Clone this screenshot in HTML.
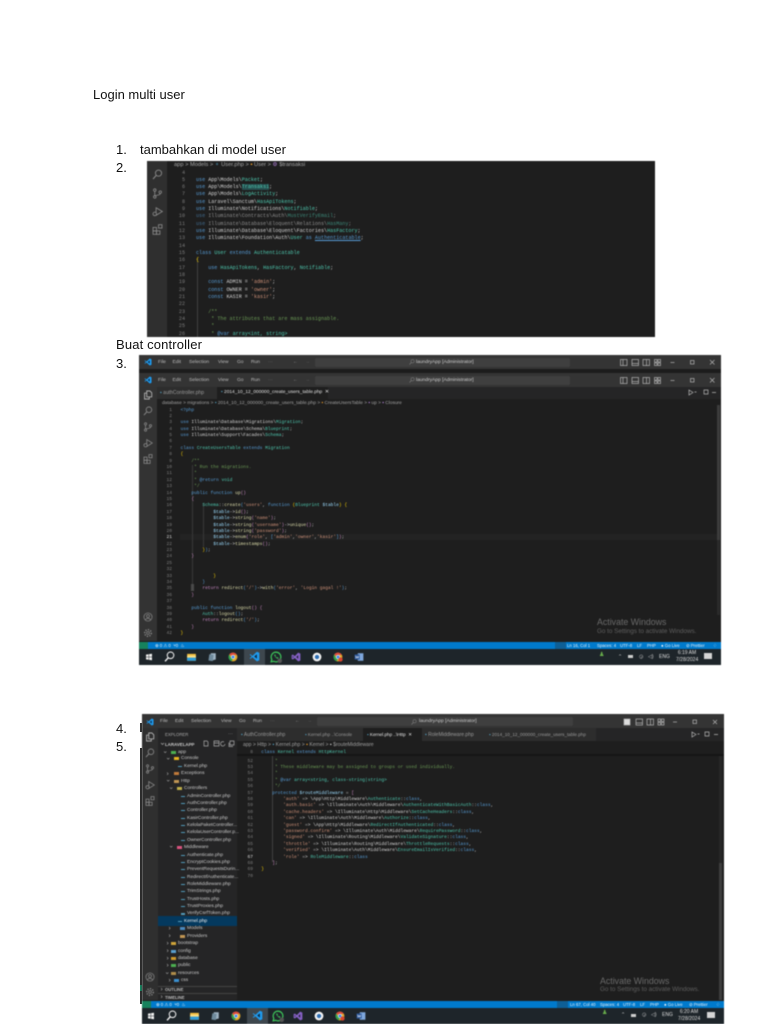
<!DOCTYPE html>
<html><head><meta charset="utf-8"><title>Login multi user</title>
<style>
html,body{margin:0;padding:0;background:#fff}
body{position:relative;width:768px;height:1024px;overflow:hidden;font-family:"Liberation Sans",sans-serif}
.d{position:absolute;font-size:13px;line-height:16px;color:#111;white-space:nowrap}
.w{position:absolute;left:0;top:0;width:768px;height:1024px;filter:blur(.4px)}
.r{position:absolute}
pre{position:absolute;margin:0;font-family:"Liberation Mono",monospace;white-space:pre;color:#d4d4d4}
pre.n{color:#7d7d7d;text-align:right}
.x{position:absolute;white-space:nowrap;color:#c8c8c8;font-size:4.8px;line-height:7px}
.k{color:#569cd6}.t{color:#4ec9b0}.s{color:#ce9178}.c{color:#6a9955}.v{color:#9cdcfe}.f{color:#dcdcaa}.y{color:#ffd700}.q{color:#c586c0}
.u{text-decoration:underline;color:#569cd6}
.sb{position:absolute;white-space:nowrap;color:#e8f2fa;font-size:4.3px;line-height:7px}
.e{position:absolute;white-space:nowrap;color:#bdbdbd;font-size:4.9px;line-height:8px}
.t3{position:absolute;white-space:nowrap;color:#c8c8c8;font-size:4.8px;line-height:7px}
.t3 b{position:absolute;left:-6.5px;top:3px;width:4px;height:1.4px;background:#519aba}
.t3 i{position:absolute;left:-7px;top:2px;width:4.5px;height:3.2px;background:#c09553}
svg{position:absolute;overflow:visible}
</style></head><body>

<div class="d" style="left:93px;top:87px">Login multi user</div>
<div class="d" style="left:116px;top:142px">1.</div>
<div class="d" style="left:140px;top:142px">tambahkan di model user</div>
<div class="d" style="left:116px;top:160px">2.</div>
<div class="d" style="left:116px;top:337px;letter-spacing:.15px">Buat controller</div>
<div class="d" style="left:116px;top:356px">3.</div>
<div class="d" style="left:116px;top:721px">4.</div>
<div class="d" style="left:116px;top:739px">5.</div>
<div class="r" style="left:140px;top:723px;width:2px;height:9px;background:#333"></div>
<div class="r" style="left:140px;top:748px;width:2px;height:256px;background:#2b2b2b"></div>
<div class="r" style="left:140px;top:985px;width:2px;height:6px;background:#16825d"></div>

<svg width="0" height="0" style="left:0;top:0">
<defs>
<symbol id="se" viewBox="0 0 16 16"><circle cx="9.5" cy="6" r="4.5" fill="none" stroke="#8a8a8a" stroke-width="1.3"/><path d="M6 9.5 1.5 14.5" stroke="#8a8a8a" stroke-width="1.5" fill="none"/></symbol>
<symbol id="gi" viewBox="0 0 16 16"><g fill="none" stroke="#8a8a8a" stroke-width="1.2"><circle cx="4" cy="3" r="1.8"/><circle cx="4" cy="13" r="1.8"/><circle cx="12" cy="6" r="1.8"/><path d="M4 5v6M12 8c0 3-6 2-8 3.5"/></g></symbol>
<symbol id="de" viewBox="0 0 16 16"><g fill="none" stroke="#8a8a8a" stroke-width="1.2"><path d="M6 2.5 15 8l-9 5.5z"/><circle cx="4" cy="11.5" r="2.6" fill="#333"/></g></symbol>
<symbol id="ex" viewBox="0 0 16 16"><g fill="none" stroke="#8a8a8a" stroke-width="1.2"><rect x="1.5" y="5" width="5" height="5"/><rect x="1.5" y="10" width="5" height="5"/><rect x="6.5" y="10" width="5" height="5"/><rect x="9.5" y="1" width="5" height="5"/></g></symbol>
<symbol id="fi" viewBox="0 0 16 16"><g fill="none" stroke="#bdbdbd" stroke-width="1.3"><path d="M6 1.5h5l3 3V11H6z"/><path d="M6 5H2.5v9.5H10V11"/></g></symbol>
<symbol id="ac" viewBox="0 0 16 16"><g fill="none" stroke="#8a8a8a" stroke-width="1.1"><circle cx="8" cy="8" r="6.5"/><circle cx="8" cy="6.5" r="2.3"/><path d="M3.5 12.5c2-3 7-3 9 0"/></g></symbol>
<symbol id="ge" viewBox="0 0 16 16"><g fill="none" stroke="#8a8a8a"><circle cx="8" cy="8" r="2.2" stroke-width="1.1"/><circle cx="8" cy="8" r="5.3" stroke-width="2.2" stroke-dasharray="2 2.1"/></g></symbol>
<symbol id="vs" viewBox="0 0 16 16"><path d="M11.5 1 15 2.6v10.8L11.5 15 5 9l-3 2.4-1-.8L4 8 1 5.4l1-.8L5 7z" fill="#1f9cf0"/><path d="M11.5 4.8 7.5 8l4 3.2z" fill="#0b2a45"/></symbol>
<symbol id="wi" viewBox="0 0 16 16"><path d="M2 3.2 7.3 2.4v5.1H2zM8.2 2.3 14 1.5v6H8.2zM2 8.4h5.3v5.2L2 12.8zM8.2 8.4H14v6.1l-5.8-.8z" fill="#f2f2f2"/></symbol>
<symbol id="ts" viewBox="0 0 16 16"><circle cx="9.5" cy="6.2" r="4.8" fill="none" stroke="#f2f2f2" stroke-width="1.5"/><path d="M6 10 1.5 15" stroke="#f2f2f2" stroke-width="2"/></symbol>
<symbol id="fo" viewBox="0 0 16 16"><path d="M1 3h14v11H1z" fill="#f5c242"/><path d="M1 6h14v3H1z" fill="#fbe08a"/><path d="M1 9h14v5H1z" fill="#2d9cdb"/></symbol>
<symbol id="no" viewBox="0 0 16 16"><path d="M6 2h8v10l-8 2z" fill="#9fb4c4"/><path d="M3 4h7v10H3z" fill="#6f8a9c" transform="rotate(8 6 9)"/></symbol>
<symbol id="ch" viewBox="0 0 16 16"><circle cx="8" cy="8" r="7" fill="#e0a92c"/><path d="M8 1a7 7 0 0 1 6.1 3.5H8a3.5 3.5 0 0 0-3.1 1.9L2 4A7 7 0 0 1 8 1z" fill="#dd4b3e"/><path d="M2 4l3 5.5a3.5 3.5 0 0 0 3 2L5.3 14.5A7 7 0 0 1 2 4z" fill="#2fa24f"/><circle cx="8" cy="8" r="3.2" fill="#fff"/><circle cx="8" cy="8" r="2.4" fill="#3f87f0"/></symbol>
<symbol id="wa" viewBox="0 0 16 16"><path d="M8 1.5a6.5 6.5 0 0 1 0 13 6.500 6.500 0 0 1-3-.8L1.500 14.500l.9-3.300A6.500 6.500 0 0 1 8 1.500z" fill="none" stroke="#3ec75a" stroke-width="1.6"/><path d="M5.500 5c1 3 2.500 4.500 5 5.500l.8-1.500-1.600-.9-.7.6c-.8-.4-1.400-1-1.800-1.800l.6-.7L7 4.600z" fill="#3ec75a"/><circle cx="13" cy="13" r="3" fill="#555"/></symbol>
<symbol id="vp" viewBox="0 0 16 16"><path d="M11.500 1 15 2.500v11L11.500 15 6 9.500 3 12l-2-1V5l2-1 3 2.500z" fill="#8661c5"/><path d="M11.500 5 8.500 8l3 3zM2.800 6.500v3L4.300 8z" fill="#1a1f2b"/></symbol>
<symbol id="bc" viewBox="0 0 16 16"><circle cx="8" cy="8" r="7" fill="#f4f4f4"/><circle cx="8" cy="8" r="3.500" fill="#2d6fb5"/></symbol>
<symbol id="cb" viewBox="0 0 16 16"><use href="#ch"/><circle cx="12" cy="12" r="3.400" fill="#d8462f"/></symbol>
<symbol id="wo" viewBox="0 0 16 16"><path d="M6 2h9v12H6z" fill="#7fa8dd"/><path d="M1 4h8v8H1z" fill="#2a5699"/><path d="M2.500 6l1 4 1.500-3 1.500 3 1-4" stroke="#fff" stroke-width=".8" fill="none"/></symbol>
</defs>
</svg>

<!-- IMAGE 1 -->
<div class="w">
<div class="r" style="left:147px;top:161px;width:508px;height:176px;background:#1e1e1e"></div>
<div class="r" style="left:147px;top:161px;width:20px;height:176px;background:#2f2f2f"></div>
<div class="r" style="left:196.500px;top:258px;width:.6px;height:79px;background:#404040"></div>
<div class="e" style="left:174px;top:161px;font-size:5.700px;color:#a8a8a8">app &gt; Models &gt; <span style="color:#519aba">⚬</span> User.php &gt; <span style="color:#ee9d28">▪</span> User &gt; <span style="color:#b180d7">⚙</span> $transaksi</div>
<svg style="left:152px;top:169px" width="11" height="11"><use href="#se"/></svg>
<svg style="left:152px;top:188px" width="11" height="11"><use href="#gi"/></svg>
<svg style="left:152px;top:206px" width="11" height="11"><use href="#de"/></svg>
<svg style="left:152px;top:224px" width="11" height="11"><use href="#ex"/></svg>
<pre class="n" style="left:165px;top:169.500px;width:20px;font-size:5.080px;line-height:7.330px">4
5
6
7
8
9
10
11
12
13
14
15
16
17
18
19
20
21
22
23
24
25
26</pre>
<pre style="left:196px;top:169.500px;font-size:5.080px;line-height:7.330px">

<span class="k">use</span> App\Models\<span class="t">Packet</span>;
<span class="k">use</span> App\Models\<span class="t" style="background:#264f4f">Transaksi</span>;
<span class="k">use</span> App\Models\<span class="t">LogActivity</span>;
<span class="k">use</span> Laravel\Sanctum\<span class="t">HasApiTokens</span>;
<span class="k">use</span> Illuminate\Notifications\<span class="t">Notifiable</span>;
<span style="opacity:.6"><span class="k">use</span> Illuminate\Contracts\Auth\<span class="t">MustVerifyEmail</span>;</span>
<span style="opacity:.6"><span class="k">use</span> Illuminate\Database\Eloquent\Relations\<span class="t">HasMany</span>;</span>
<span class="k">use</span> Illuminate\Database\Eloquent\Factories\<span class="t">HasFactory</span>;
<span class="k">use</span> Illuminate\Foundation\Auth\<span class="t">User</span> <span class="k">as</span> <span class="u">Authenticatable</span>;

<span class="k">class</span> <span class="t">User</span> <span class="k">extends</span> <span class="t">Authenticatable</span>
<span class="y">{</span>
    <span class="k">use</span> <span class="t">HasApiTokens</span>, <span class="t">HasFactory</span>, <span class="t">Notifiable</span>;

    <span class="k">const</span> ADMIN = <span class="s">'admin'</span>;
    <span class="k">const</span> OWNER = <span class="s">'owner'</span>;
    <span class="k">const</span> KASIR = <span class="s">'kasir'</span>;

    <span class="c">/**</span>
     <span class="c">* The attributes that are mass assignable.</span>
     <span class="c">*</span>
     <span class="c">* </span><span class="k">@var</span> <span class="t">array&lt;int, string&gt;</span></pre>
</div>

<!-- IMAGE 2 -->
<div class="w">
<div class="r" style="left:139px;top:355px;width:582px;height:310px;background:#1e1e1e"></div>
<div class="r" style="left:139px;top:355px;width:582px;height:14px;background:#343434"></div>
<div class="r" style="left:139px;top:369px;width:582px;height:4px;background:#1c1c1c"></div>
<div class="r" style="left:139px;top:373px;width:582px;height:14px;background:#343434"></div>
<div class="r" style="left:139px;top:387px;width:582px;height:12px;background:#252526"></div>
<div class="r" style="left:157px;top:387px;width:60px;height:12px;background:#2d2d2d"></div>
<div class="r" style="left:217px;top:387px;width:111px;height:12px;background:#1e1e1e"></div>
<div class="r" style="left:139px;top:387px;width:18px;height:254px;background:#333"></div>
<div class="r" style="left:315px;top:358px;width:255px;height:9px;background:#3f3f3f;border-radius:2px"></div>
<div class="r" style="left:315px;top:376px;width:255px;height:9px;background:#3f3f3f;border-radius:2px"></div>
<div class="r" style="left:717px;top:405px;width:3px;height:135px;background:#3c3c3c"></div>
<div class="r" style="left:717px;top:540px;width:3px;height:75px;background:#2a2a2a"></div>
<div class="r" style="left:180px;top:533.700px;width:537px;height:6.400px;background:#232323"></div>
<div class="r" style="left:191.500px;top:465px;width:.6px;height:120px;background:#383838"></div>
<div class="r" style="left:202.500px;top:503px;width:.6px;height:44px;background:#383838"></div>
<div class="r" style="left:191px;top:584px;width:3px;height:7px;background:#4a4a4a"></div>

<svg style="left:144px;top:358px" width="8" height="8"><use href="#vs"/></svg>
<svg style="left:144px;top:376px" width="8" height="8"><use href="#vs"/></svg>
<div class="e" style="left:158px;top:358.500px">File</div><div class="e" style="left:172.500px;top:358.500px">Edit</div><div class="e" style="left:189px;top:358.500px">Selection</div><div class="e" style="left:218px;top:358.500px">View</div><div class="e" style="left:237px;top:358.500px">Go</div><div class="e" style="left:251px;top:358.500px">Run</div><div class="e" style="left:268px;top:358.500px;color:#777">···</div><div class="e" style="left:293px;top:358.500px;color:#999">←</div><div class="e" style="left:305px;top:358.500px;color:#666">→</div>
<div class="e" style="left:158px;top:376.500px">File</div><div class="e" style="left:172.500px;top:376.500px">Edit</div><div class="e" style="left:189px;top:376.500px">Selection</div><div class="e" style="left:218px;top:376.500px">View</div><div class="e" style="left:237px;top:376.500px">Go</div><div class="e" style="left:251px;top:376.500px">Run</div><div class="e" style="left:268px;top:376.500px;color:#777">···</div><div class="e" style="left:293px;top:376.500px;color:#999">←</div><div class="e" style="left:305px;top:376.500px;color:#666">→</div>
<svg style="left:409px;top:359px" width="6" height="6"><use href="#se"/></svg>
<svg style="left:409px;top:377px" width="6" height="6"><use href="#se"/></svg>
<div class="e" style="left:416px;top:358.500px;color:#ccc">laundryApp [Administrator]</div>
<div class="e" style="left:416px;top:376.500px;color:#ccc">laundryApp [Administrator]</div>

<svg style="left:0;top:0" width="768" height="1024"><g fill="none" stroke="#b5b5b5" stroke-width=".7">
<rect x="620.500" y="359.500" width="6.500" height="6"/><path d="M623 359.500v6"/><rect x="632" y="359.500" width="6.500" height="6"/><path d="M632 363.500h6.500"/><rect x="643" y="359.500" width="6.500" height="6"/><path d="M646.500 359.500v6"/><rect x="654.500" y="359.500" width="2.500" height="2.500"/><rect x="658" y="359.500" width="2.500" height="2.500"/><rect x="654.500" y="363" width="2.500" height="2.500"/><rect x="658" y="363" width="2.500" height="2.500"/>
<path d="M670.500 362.500h4"/><rect x="690.500" y="360.500" width="3.500" height="3.500"/><path d="M710 360l4.500 4.500M714.500 360 710 364.500"/>
<rect x="620.500" y="377.500" width="6.500" height="6"/><path d="M623 377.500v6"/><rect x="632" y="377.500" width="6.500" height="6"/><path d="M632 381.500h6.500"/><rect x="643" y="377.500" width="6.500" height="6"/><path d="M646.500 377.500v6"/><rect x="654.500" y="377.500" width="2.500" height="2.500"/><rect x="658" y="377.500" width="2.500" height="2.500"/><rect x="654.500" y="381" width="2.500" height="2.500"/><rect x="658" y="381" width="2.500" height="2.500"/>
<path d="M670.500 380.500h4"/><rect x="690.500" y="378.500" width="3.500" height="3.500"/><path d="M710 378l4.500 4.500M714.500 378 710 382.500"/>
<path d="M689 390l4 2.500-4 2.500zM694.500 392h2M704 390h4v4h-4zM712 392.500h4"/></g></svg>

<div class="e" style="left:160px;top:389px;font-size:5px;color:#999"><span style="color:#519aba">▪</span> authController.php</div>
<div class="e" style="left:221px;top:389px;font-size:4.800px;color:#e0e0e0"><span style="color:#519aba">▪</span> 2014_10_12_000000_create_users_table.php &nbsp;✕</div>
<div class="e" style="left:162px;top:399.500px;font-size:4.800px;color:#a0a0a0">database &gt; migrations &gt; <span style="color:#519aba">▪</span> 2014_10_12_000000_create_users_table.php &gt; <span style="color:#ee9d28">▪</span> CreateUsersTable &gt; <span style="color:#b180d7">▪</span> up &gt; <span style="color:#b180d7">▪</span> Closure</div>

<svg style="left:143px;top:390px" width="10" height="10"><use href="#fi"/></svg>
<svg style="left:143px;top:406px" width="10" height="10"><use href="#se"/></svg>
<svg style="left:143px;top:422px" width="10" height="10"><use href="#gi"/></svg>
<svg style="left:143px;top:438px" width="10" height="10"><use href="#de"/></svg>
<svg style="left:143px;top:454px" width="10" height="10"><use href="#ex"/></svg>
<svg style="left:143px;top:612px" width="10" height="10"><use href="#ac"/></svg>
<svg style="left:143px;top:628px" width="10" height="10"><use href="#ge"/></svg>

<pre class="n" style="left:152px;top:407.500px;width:20px;font-size:4.550px;line-height:6.390px">1
2
3
4
5
6
7
8
9
10
11
12
13
14
15
16
17
18
19
20
<span style="color:#ddd">21</span>
22
23
24
25
32
33
34
35
36
37
38
39
40
41
42</pre>
<pre style="left:180.500px;top:407.500px;font-size:4.550px;line-height:6.390px"><span class="k">&lt;?php</span>

<span class="k">use</span> Illuminate\Database\Migrations\<span class="t">Migration</span>;
<span class="k">use</span> Illuminate\Database\Schema\<span class="t">Blueprint</span>;
<span class="k">use</span> Illuminate\Support\Facades\<span class="t">Schema</span>;

<span class="k">class</span> <span class="t">CreateUsersTable</span> <span class="k">extends</span> <span class="t">Migration</span>
<span class="y">{</span>
    <span class="c">/**</span>
     <span class="c">* Run the migrations.</span>
     <span class="c">*</span>
     <span class="c">* </span><span class="k">@return</span> <span class="t">void</span>
     <span class="c">*/</span>
    <span class="k">public function</span> <span class="f">up</span><span class="q">()</span>
    <span class="q">{</span>
        <span class="t">Schema</span>::<span class="f">create</span><span class="k">(</span><span class="s">'users'</span>, <span class="k">function</span> <span class="y">(</span><span class="t">Blueprint</span> <span class="v">$table</span><span class="y">)</span> <span class="y">{</span>
            <span class="v">$table</span>-&gt;<span class="f">id</span><span class="q">()</span>;
            <span class="v">$table</span>-&gt;<span class="f">string</span><span class="q">(</span><span class="s">'name'</span><span class="q">)</span>;
            <span class="v">$table</span>-&gt;<span class="f">string</span><span class="q">(</span><span class="s">'username'</span><span class="q">)</span>-&gt;<span class="f">unique</span><span class="q">()</span>;
            <span class="v">$table</span>-&gt;<span class="f">string</span><span class="q">(</span><span class="s">'password'</span><span class="q">)</span>;
            <span class="v">$table</span>-&gt;<span class="f">enum</span><span class="q">(</span><span class="s">'role'</span>, <span class="k">[</span><span class="s">'admin'</span>,<span class="s">'owner'</span>,<span class="s">'kasir'</span><span class="k">]</span><span class="q">)</span>;
            <span class="v">$table</span>-&gt;<span class="f">timestamps</span><span class="q">()</span>;
        <span class="y">}</span><span class="k">)</span>;
    <span class="q">}</span>


            <span class="y">}</span>
        <span class="k">}</span>
        <span class="q">return</span> <span class="f">redirect</span><span class="k">(</span><span class="s">'/'</span><span class="k">)</span>-&gt;<span class="f">with</span><span class="k">(</span><span class="s">'error'</span>, <span class="s">'Login gagal !'</span><span class="k">)</span>;
    <span class="q">}</span>

    <span class="k">public function</span> <span class="f">logout</span><span class="q">()</span> <span class="q">{</span>
        <span class="t">Auth</span>::<span class="f">logout</span><span class="k">()</span>;
        <span class="q">return</span> <span class="f">redirect</span><span class="k">(</span><span class="s">'/'</span><span class="k">)</span>;
    <span class="q">}</span>
<span class="y">}</span>
</pre>

<div class="r" style="left:597px;top:617px;font-size:8.800px;line-height:11px;color:#6b6b6b;white-space:nowrap">Activate Windows</div>
<div class="r" style="left:597px;top:628px;font-size:6.300px;line-height:8px;color:#5f5f5f;white-space:nowrap">Go to Settings to activate Windows.</div>

<div class="r" style="left:139px;top:641.700px;width:582px;height:7.300px;background:#007acc"></div>
<div class="r" style="left:139px;top:641.700px;width:9px;height:7.300px;background:#16825d"></div>
<div class="r" style="left:555px;top:641.700px;width:11px;height:7.300px;background:#0e5f96"></div>
<div class="sb" style="left:155px;top:642px">⊗ 0 ⚠ 0 &nbsp;⑂0 &nbsp;♨</div>
<div class="sb" style="left:567px;top:642px">Ln 16, Col 1</div><div class="sb" style="left:597px;top:642px">Spaces: 4</div><div class="sb" style="left:620px;top:642px">UTF-8</div><div class="sb" style="left:637px;top:642px">LF</div><div class="sb" style="left:647px;top:642px">PHP</div><div class="sb" style="left:661px;top:642px">● Go Live</div><div class="sb" style="left:686px;top:642px">⊘ Prettier</div><div class="sb" style="left:713px;top:642px">♢</div>

<div class="r" style="left:139px;top:649px;width:582px;height:16px;background:#1e252a"></div>
<div class="r" style="left:244px;top:649px;width:21px;height:16px;background:#3e474e"></div>
<svg style="left:145px;top:653px" width="8" height="8"><use href="#wi"/></svg>
<svg style="left:164px;top:651px" width="11" height="11"><use href="#ts"/></svg>
<svg style="left:186px;top:652px" width="11" height="10"><use href="#fo"/></svg>
<svg style="left:207px;top:652px" width="10" height="10"><use href="#no"/></svg>
<svg style="left:228px;top:652px" width="10" height="10"><use href="#ch"/></svg>
<svg style="left:249px;top:651px" width="11" height="11"><use href="#vs"/></svg>
<svg style="left:270px;top:651px" width="12" height="12"><use href="#wa"/></svg>
<svg style="left:291px;top:651.500px" width="10" height="10"><use href="#vp"/></svg>
<svg style="left:312px;top:652px" width="10" height="10"><use href="#bc"/></svg>
<svg style="left:333px;top:652px" width="10" height="10"><use href="#cb"/></svg>
<svg style="left:354px;top:652px" width="10" height="10"><use href="#wo"/></svg>
<div class="sb" style="left:599px;top:652px;color:#6ab04c;font-size:6px">♟</div>
<div class="sb" style="left:618px;top:654px;color:#ddd;font-size:5px">⌃</div>
<div class="r" style="left:628px;top:655px;width:5px;height:3px;background:#cfcfcf"></div>
<div class="sb" style="left:639px;top:654px;color:#ccc;font-size:5px">◶</div>
<div class="sb" style="left:648px;top:654px;color:#ccc;font-size:5px">◁)</div>
<div class="sb" style="left:659px;top:653.500px;color:#ddd;font-size:5px">ENG</div>
<div class="sb" style="left:676px;top:650px;color:#ddd;font-size:5px;width:22px;text-align:center;line-height:7px">6:19 AM<br>7/28/2024</div>
<div class="r" style="left:704px;top:653px;width:8px;height:6px;background:#d5d5d5"></div>
</div>

<!-- IMAGE 3 -->
<div class="w">
<div class="r" style="left:142px;top:714px;width:582px;height:310px;background:#1e1e1e"></div>
<div class="r" style="left:142px;top:714px;width:582px;height:14px;background:#343434"></div>
<div class="r" style="left:142px;top:728px;width:16px;height:272px;background:#2f2f2f"></div>
<div class="r" style="left:158px;top:728px;width:79px;height:272px;background:#252526"></div>
<div class="r" style="left:237px;top:728px;width:487px;height:13px;background:#252526"></div>
<div class="r" style="left:237px;top:728px;width:126px;height:13px;background:#2d2d2d"></div>
<div class="r" style="left:363px;top:728px;width:59px;height:13px;background:#1e1e1e"></div>
<div class="r" style="left:422px;top:728px;width:174px;height:13px;background:#2d2d2d"></div>
<div class="r" style="left:237px;top:754px;width:487px;height:1.500px;background:#151515"></div>
<div class="r" style="left:317px;top:717px;width:256px;height:9px;background:#3f3f3f;border-radius:2px"></div>
<div class="r" style="left:719px;top:756px;width:3px;height:107px;background:#272727"></div>
<div class="r" style="left:719px;top:863px;width:3px;height:137px;background:#3e3e3e"></div>
<div class="r" style="left:158px;top:916px;width:79px;height:9.600px;background:#04395e"></div>
<div class="r" style="left:158px;top:985.500px;width:79px;height:.6px;background:#444"></div>
<div class="r" style="left:158px;top:993px;width:79px;height:.6px;background:#444"></div>
<div class="r" style="left:272px;top:756px;width:.6px;height:106px;background:#404040"></div>

<svg style="left:146px;top:718px" width="8" height="8"><use href="#vs"/></svg>
<div class="e" style="left:160px;top:718px">File</div><div class="e" style="left:175px;top:718px">Edit</div><div class="e" style="left:191px;top:718px">Selection</div><div class="e" style="left:221px;top:718px">View</div><div class="e" style="left:239px;top:718px">Go</div><div class="e" style="left:253px;top:718px">Run</div><div class="e" style="left:270px;top:718px;color:#777">···</div><div class="e" style="left:295px;top:718px;color:#999">←</div><div class="e" style="left:307px;top:718px;color:#666">→</div>
<svg style="left:411px;top:719px" width="6" height="6"><use href="#se"/></svg>
<div class="e" style="left:419px;top:718px;color:#ccc">laundryApp [Administrator]</div>
<svg style="left:0;top:0" width="768" height="1024"><g fill="none" stroke="#b5b5b5" stroke-width=".7">
<rect x="624" y="719" width="6" height="6" fill="#ddd"/><rect x="636" y="719" width="6.500" height="6"/><path d="M636 723h6.500"/><rect x="647" y="719" width="6.500" height="6"/><path d="M650.500 719v6"/><rect x="658" y="719" width="2.500" height="2.500"/><rect x="661.500" y="719" width="2.500" height="2.500"/><rect x="658" y="722.500" width="2.500" height="2.500"/><rect x="661.500" y="722.500" width="2.500" height="2.500"/>
<path d="M673 722h4"/><rect x="693" y="720" width="3.500" height="3.500"/><path d="M713 720l4 4M717 720l-4 4"/>
<path d="M692 732l4 2.500-4 2.500zM697.500 734h2M705 732h4v4h-4zM714 734.500h4"/></g></svg>

<div class="e" style="left:241px;top:730.500px;font-size:5px;color:#999"><span style="color:#519aba">▪</span> AuthController.php</div>
<div class="e" style="left:305px;top:730.500px;font-size:4.600px;color:#999"><span style="color:#519aba">▪</span> Kernel.php ..\Console</div>
<div class="e" style="left:367px;top:730.500px;font-size:4.600px;color:#e4e4e4"><span style="color:#519aba">▪</span> Kernel.php ..\Http &nbsp;✕</div>
<div class="e" style="left:425px;top:730.500px;font-size:5px;color:#999"><span style="color:#519aba">▪</span> RoleMiddleware.php</div>
<div class="e" style="left:489px;top:730.500px;font-size:4.600px;color:#999"><span style="color:#519aba">▪</span> 2014_10_12_000000_create_users_table.php</div>
<div class="e" style="left:243px;top:740.500px;font-size:5.100px;color:#a0a0a0">app &gt; Http &gt; <span style="color:#519aba">▪</span> Kernel.php &gt; <span style="color:#ee9d28">▪</span> Kernel &gt; <span style="color:#ccc">▪</span> $routeMiddleware</div>

<svg style="left:145px;top:732px" width="10" height="10"><use href="#fi"/></svg>
<svg style="left:145px;top:748px" width="10" height="10"><use href="#se"/></svg>
<svg style="left:145px;top:764px" width="10" height="10"><use href="#gi"/></svg>
<svg style="left:145px;top:780px" width="10" height="10"><use href="#de"/></svg>
<svg style="left:145px;top:796px" width="10" height="10"><use href="#ex"/></svg>
<svg style="left:145px;top:972px" width="10" height="10"><use href="#ac"/></svg>
<svg style="left:145px;top:987px" width="10" height="10"><use href="#ge"/></svg>

<!-- explorer -->
<div class="x" style="left:165px;top:731px;font-size:4.300px;color:#aaa">EXPLORER</div>
<div class="x" style="left:228px;top:731px;color:#aaa">···</div>
<div class="x" style="left:165px;top:741px;font-size:4.400px;font-weight:bold;color:#ccc">LARAVELAPP</div>
<svg style="left:0;top:0" width="768" height="1024"><g fill="none" stroke="#aaa" stroke-width=".7"><path d="M161 743l1.500 1.500 1.500-1.500M204 741h3l1 1v4h-4zM214 741h5v5h-5zM214 743h5M224 742a2.200 2.200 0 1 0 1 2M230 741h4v4h-4zM229 742.500v4h4"/></g>
<g fill="none" stroke="#999" stroke-width=".6"><path d="M164 751.500l1.200 1.200 1.200-1.200M167 758l1.200 1.200 1.200-1.200M167 772.500l1.200 1.200-1.200 1.200M167 780l1.200 1.200 1.200-1.200M170 787.500l1.200 1.200 1.200-1.200M170 846l1.200 1.200 1.200-1.200M169 927l1.200 1.200-1.200 1.200M169 934.500l1.200 1.200-1.200 1.200M167 942l1.200 1.200-1.200 1.200M167 949.500l1.200 1.200-1.200 1.200M167 957l1.200 1.200-1.200 1.200M167 964l1.200 1.200-1.200 1.200M166 972.500l1.200 1.200 1.200-1.200M169 979l1.200 1.200-1.200 1.200M161 988l1.200 1.200-1.200 1.200M161 995.500l1.200 1.200-1.200 1.200"/></g></svg>

<div class="t3" style="left:178px;top:748.500px"><i style="background:#4caf50"></i>app</div>
<div class="t3" style="left:181px;top:755.200px"><i style="background:#e6b422"></i>Console</div>
<div class="t3" style="left:184px;top:762.500px"><b></b>Kernel.php</div>
<div class="t3" style="left:181px;top:770.200px"><i style="background:#c07a3a"></i>Exceptions</div>
<div class="t3" style="left:181px;top:777.500px"><i></i>Http</div>
<div class="t3" style="left:184px;top:785.200px"><i style="background:#bfae4a"></i>Controllers</div>
<div class="t3" style="left:187px;top:792.500px"><b></b>AdminController.php</div>
<div class="t3" style="left:187px;top:799.500px"><b></b>AuthController.php</div>
<div class="t3" style="left:187px;top:807.100px"><b></b>Controller.php</div>
<div class="t3" style="left:187px;top:814.500px"><b></b>KasirController.php</div>
<div class="t3" style="left:187px;top:821.500px"><b></b>KelolaPaketController...</div>
<div class="t3" style="left:187px;top:829.100px"><b></b>KelolaUserController.p...</div>
<div class="t3" style="left:187px;top:836.500px"><b></b>OwnerController.php</div>
<div class="t3" style="left:184px;top:843.500px"><i style="background:#d9537f"></i>Middleware</div>
<div class="t3" style="left:187px;top:851.500px"><b></b>Authenticate.php</div>
<div class="t3" style="left:187px;top:858.500px"><b></b>EncryptCookies.php</div>
<div class="t3" style="left:187px;top:866.100px"><b></b>PreventRequestsDurin...</div>
<div class="t3" style="left:187px;top:873.500px"><b></b>RedirectIfAuthenticate...</div>
<div class="t3" style="left:187px;top:880.500px"><b></b>RoleMiddleware.php</div>
<div class="t3" style="left:187px;top:888.100px"><b></b>TrimStrings.php</div>
<div class="t3" style="left:187px;top:895.500px"><b></b>TrustHosts.php</div>
<div class="t3" style="left:187px;top:902.500px"><b></b>TrustProxies.php</div>
<div class="t3" style="left:187px;top:910.300px"><b></b>VerifyCsrfToken.php</div>
<div class="t3" style="left:184px;top:917.500px;color:#eee"><b></b>Kernel.php</div>
<div class="t3" style="left:187px;top:925.100px"><i style="background:#4a8ac0"></i>Models</div>
<div class="t3" style="left:187px;top:932.500px"><i style="background:#c09553"></i>Providers</div>
<div class="t3" style="left:178px;top:940.100px"><i style="background:#d0a53a"></i>bootstrap</div>
<div class="t3" style="left:178px;top:947.500px"><i style="background:#5aa0d0"></i>config</div>
<div class="t3" style="left:178px;top:954.500px"><i style="background:#d09a2a"></i>database</div>
<div class="t3" style="left:178px;top:962.100px"><i style="background:#4caf50"></i>public</div>
<div class="t3" style="left:178px;top:969.500px"><i style="background:#b08d4a"></i>resources</div>
<div class="t3" style="left:181px;top:976.500px"><i style="background:#3a8fd0"></i>css</div>
<div class="x" style="left:165px;top:986px;font-size:4.200px;font-weight:bold;color:#bbb">OUTLINE</div>
<div class="x" style="left:165px;top:993.500px;font-size:4.200px;font-weight:bold;color:#bbb">TIMELINE</div>

<pre class="n" style="left:233px;top:758.500px;width:20px;font-size:4.550px;line-height:6.400px">52
53
54
55
56
57
58
59
60
61
62
63
64
65
66
<span style="color:#ddd">67</span>
68
69
70</pre>
<pre class="n" style="left:233px;top:749.500px;width:20px;font-size:4.550px;line-height:6.400px">8</pre>
<pre style="left:261.300px;top:749.500px;font-size:4.550px;line-height:6.400px"><span class="k">class</span> <span class="t">Kernel</span> <span class="k">extends</span> <span class="t">HttpKernel</span></pre>
<pre style="left:261.300px;top:758.500px;font-size:4.550px;line-height:6.400px">     <span class="c">*</span>
     <span class="c">* These middleware may be assigned to groups or used individually.</span>
     <span class="c">*</span>
     <span class="c">* </span><span class="k">@var</span> <span class="t">array&lt;string, class-string|string&gt;</span>
     <span class="c">*/</span>
    <span class="k">protected</span> <span class="v">$routeMiddleware</span> = <span class="q">[</span>
        <span class="s">'auth'</span> =&gt; \App\Http\Middleware\<span class="t">Authenticate</span>::<span class="k">class</span>,
        <span class="s">'auth.basic'</span> =&gt; \Illuminate\Auth\Middleware\<span class="t">AuthenticateWithBasicAuth</span>::<span class="k">class</span>,
        <span class="s">'cache.headers'</span> =&gt; \Illuminate\Http\Middleware\<span class="t">SetCacheHeaders</span>::<span class="k">class</span>,
        <span class="s">'can'</span> =&gt; \Illuminate\Auth\Middleware\<span class="t">Authorize</span>::<span class="k">class</span>,
        <span class="s">'guest'</span> =&gt; \App\Http\Middleware\<span class="t">RedirectIfAuthenticated</span>::<span class="k">class</span>,
        <span class="s">'password.confirm'</span> =&gt; \Illuminate\Auth\Middleware\<span class="t">RequirePassword</span>::<span class="k">class</span>,
        <span class="s">'signed'</span> =&gt; \Illuminate\Routing\Middleware\<span class="t">ValidateSignature</span>::<span class="k">class</span>,
        <span class="s">'throttle'</span> =&gt; \Illuminate\Routing\Middleware\<span class="t">ThrottleRequests</span>::<span class="k">class</span>,
        <span class="s">'verified'</span> =&gt; \Illuminate\Auth\Middleware\<span class="t">EnsureEmailIsVerified</span>::<span class="k">class</span>,
        <span class="s">'role'</span> =&gt; <span class="t">RoleMiddleware</span>::<span class="k">class</span>
    <span class="q">]</span>;
<span class="y">}</span>
</pre>

<div class="r" style="left:600px;top:976px;font-size:8.800px;line-height:11px;color:#6b6b6b;white-space:nowrap">Activate Windows</div>
<div class="r" style="left:600px;top:986px;font-size:6.300px;line-height:8px;color:#5f5f5f;white-space:nowrap">Go to Settings to activate Windows.</div>

<div class="r" style="left:142px;top:1000.500px;width:582px;height:7px;background:#007acc"></div>
<div class="r" style="left:142px;top:1000.500px;width:9px;height:7px;background:#16825d"></div>
<div class="r" style="left:557px;top:1000.500px;width:10.500px;height:7px;background:#0e5f96"></div>
<div class="sb" style="left:156px;top:1000.500px">⊗ 0 ⚠ 0 &nbsp;⑂0 &nbsp;♨</div>
<div class="sb" style="left:570px;top:1000.500px">Ln 67, Col 40</div><div class="sb" style="left:600px;top:1000.500px">Spaces: 4</div><div class="sb" style="left:623px;top:1000.500px">UTF-8</div><div class="sb" style="left:640px;top:1000.500px">LF</div><div class="sb" style="left:650px;top:1000.500px">PHP</div><div class="sb" style="left:664px;top:1000.500px">● Go Live</div><div class="sb" style="left:689px;top:1000.500px">⊘ Prettier</div><div class="sb" style="left:716px;top:1000.500px">♢</div>

<div class="r" style="left:142px;top:1007.500px;width:582px;height:16.500px;background:#1e252a"></div>
<div class="r" style="left:247px;top:1007.500px;width:21px;height:16.500px;background:#3e474e"></div>
<svg style="left:147px;top:1012px" width="8" height="8"><use href="#wi"/></svg>
<svg style="left:166px;top:1010px" width="11" height="11"><use href="#ts"/></svg>
<svg style="left:188.500px;top:1011px" width="11" height="10"><use href="#fo"/></svg>
<svg style="left:210px;top:1011px" width="10" height="10"><use href="#no"/></svg>
<svg style="left:231px;top:1011px" width="10" height="10"><use href="#ch"/></svg>
<svg style="left:252px;top:1010px" width="11" height="11"><use href="#vs"/></svg>
<svg style="left:272px;top:1010px" width="12" height="12"><use href="#wa"/></svg>
<svg style="left:293px;top:1011px" width="10" height="10"><use href="#vp"/></svg>
<svg style="left:314px;top:1011px" width="10" height="10"><use href="#bc"/></svg>
<svg style="left:335px;top:1011px" width="10" height="10"><use href="#cb"/></svg>
<svg style="left:356px;top:1011px" width="10" height="10"><use href="#wo"/></svg>
<div class="sb" style="left:602px;top:1010px;color:#6ab04c;font-size:6px">♟</div>
<div class="sb" style="left:621px;top:1012px;color:#ddd;font-size:5px">⌃</div>
<div class="r" style="left:631px;top:1014px;width:5px;height:3px;background:#cfcfcf"></div>
<div class="sb" style="left:642px;top:1012px;color:#ccc;font-size:5px">◶</div>
<div class="sb" style="left:651px;top:1012px;color:#ccc;font-size:5px">◁)</div>
<div class="sb" style="left:662px;top:1012px;color:#ddd;font-size:5px">ENG</div>
<div class="sb" style="left:678px;top:1008.500px;color:#ddd;font-size:5px;width:22px;text-align:center;line-height:7px">6:20 AM<br>7/28/2024</div>
<div class="r" style="left:707px;top:1012px;width:8px;height:6px;background:#d5d5d5"></div>
</div>
</body></html>
